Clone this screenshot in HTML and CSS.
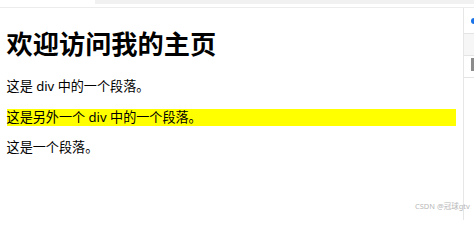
FILE: index.html
```html
<!DOCTYPE html>
<html lang="zh-CN">
<head>
<meta charset="utf-8">
<title>欢迎访问我的主页</title>
<link rel="stylesheet" href="styles.css">
</head>
<body>
<div class="topbar"><div class="topbar-strip"></div></div>
<div class="main">
  <div class="content">
    <h1>欢迎访问我的主页</h1>
    <div class="box">
      <p>这是 div 中的一个段落。</p>
    </div>
    <div class="box highlight">
      <p>这是另外一个 div 中的一个段落。</p>
    </div>
    <p>这是一个段落。</p>
  </div>
  <div class="sidebar">
    <div class="side-dot"></div>
    <div class="side-band"></div>
    <div class="side-square"></div>
    <div class="side-rule"></div>
  </div>
</div>
<div class="watermark">CSDN @冠球gtv</div>
</body>
</html>
```
FILE: styles.css
```css
html, body {
  margin: 0;
  padding: 0;
  background: #ffffff;
  width: 474px;
  height: 220px;
  overflow: hidden;
}
body {
  font-family: "Noto Sans", "Noto Sans CJK SC", sans-serif;
  color: #000;
  position: relative;
}
.topbar {
  height: 8px;
  display: flex;
  justify-content: flex-end;
  border-bottom: 1px solid #ececec;
  box-sizing: border-box;
}
.topbar-strip {
  width: 379px;
  height: 4px;
  background: #f1f1f1;
}
.main {
  display: flex;
  height: 212px;
}
.content {
  width: 464px;
  box-sizing: border-box;
  padding: 0.6px 6.6px 0;
  border-right: 1px solid #e6e6e6;
}
h1 {
  font-family: "Noto Sans CJK SC", sans-serif;
  font-weight: 700;
  font-size: 26.2px;
  line-height: 34.6px;
  margin: 17.6px 0;
}
p {
  font-size: 13.1px;
  line-height: 17.3px;
  margin: 13.1px 0;
}
.highlight {
  background: #ffff00;
}
.sidebar {
  flex: 1;
  display: flex;
  flex-direction: column;
  align-items: flex-end;
  position: relative;
}
.side-dot {
  width: 6px;
  height: 6px;
  border-radius: 50%;
  background: #1a73e8;
  margin: 10px -3px 0 0;
}
.side-band {
  align-self: stretch;
  height: 21px;
  margin-top: 9px;
  background: #f6f6f6;
  border-top: 1px solid #e4e4e4;
  border-bottom: 1px solid #e4e4e4;
}
.side-square {
  width: 3px;
  height: 13px;
  background: #8c8c8c;
  margin-top: 2px;
}
.side-rule {
  align-self: stretch;
  height: 1px;
  background: #e4e4e4;
  margin-top: 6px;
}
.watermark {
  position: absolute;
  left: 415px;
  top: 200px;
  font-size: 7.5px;
  color: #b8b8b8;
  font-family: "Noto Sans", "Noto Sans CJK SC", sans-serif;
  white-space: nowrap;
}
```
